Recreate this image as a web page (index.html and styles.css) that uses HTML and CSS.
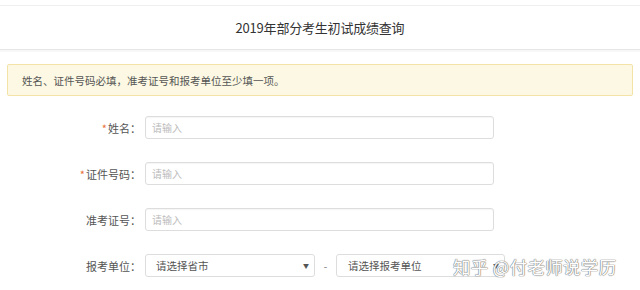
FILE: index.html
```html
<!DOCTYPE html>
<html lang="zh-CN">
<head>
<meta charset="utf-8">
<title>2019年部分考生初试成绩查询</title>
<link rel="stylesheet" href="styles.css">
</head>
<body>
<div class="page">
  <header class="header">
    <h1 class="title">2019年部分考生初试成绩查询</h1>
  </header>
  <div class="alert">姓名、证件号码必填，准考证号和报考单位至少填一项。</div>
  <form class="form">
    <div class="row">
      <label class="label"><span class="req">*</span>姓名：</label>
      <div class="input"><span class="ph">请输入</span></div>
    </div>
    <div class="row">
      <label class="label"><span class="req">*</span>证件号码：</label>
      <div class="input"><span class="ph">请输入</span></div>
    </div>
    <div class="row">
      <label class="label">准考证号：</label>
      <div class="input"><span class="ph">请输入</span></div>
    </div>
    <div class="row">
      <label class="label">报考单位：</label>
      <div class="select first"><span>请选择省市</span><span class="caret">▼</span></div>
      <span class="dash">-</span>
      <div class="select second"><span>请选择报考单位</span><span class="caret">▼</span></div>
    </div>
  </form>
  <div class="watermark">知乎 @付老师说学历</div>
</div>
</body>
</html>
```

FILE: styles.css
```css
* { box-sizing: border-box; }
html, body { margin: 0; padding: 0; background: #fff; }
body {
  font-family: "Noto Sans CJK SC", "Liberation Sans", sans-serif;
  color: #555;
}
.page {
  position: relative;
  width: 640px;
  height: 290px;
  overflow: hidden;
}
.header {
  margin-top: 5px;
  border-top: 1px solid #f0f0f0;
  border-bottom: 1px solid #e6e6e6;
  height: 45px;
  display: flex;
  align-items: center;
  justify-content: center;
  box-shadow: 0 2px 0 #f7f7f7;
}
.title {
  margin: 0;
  font-size: 13px;
  font-weight: normal;
  color: #333;
  letter-spacing: -0.2px;
}
.alert {
  margin: 14px 7px 0;
  height: 32px;
  padding: 0 14px;
  display: flex;
  align-items: center;
  background: #fcf8e3;
  border: 1px solid #f3e3a6;
  border-radius: 2px;
  font-size: 10.5px;
  color: #555;
}
.form {
  margin-top: 20px;
  display: flex;
  flex-direction: column;
  gap: 23px;
}
.row {
  display: flex;
  align-items: center;
  height: 23px;
}
.label {
  width: 141px;
  padding-right: 0;
  text-align: right;
  font-size: 11px;
  color: #555;
  margin-right: 4px;
}
.req {
  color: #e8713c;
  margin-right: 1px;
}
.input {
  width: 349px;
  height: 23px;
  border: 1px solid #ddd;
  border-radius: 3px;
  box-shadow: inset 0 1px 1px rgba(0,0,0,0.04);
  display: flex;
  align-items: center;
  padding-left: 6px;
}
.ph {
  font-size: 10px;
  color: #bbb;
}
.select {
  height: 23px;
  border: 1px solid #ddd;
  border-radius: 3px;
  display: flex;
  align-items: center;
  justify-content: space-between;
  padding: 0 5px 0 10px;
  font-size: 10.5px;
  color: #555;
}
.select.first { width: 170px; }
.select.second { width: 169px; padding-left: 11px; }
.caret {
  font-size: 6px;
  color: #555;
}
.dash {
  width: 21px;
  text-align: center;
  font-size: 10px;
  color: #777;
}
.watermark {
  position: absolute;
  left: 453px;
  top: 254px;
  font-size: 17.5px;
  color: #fff;
  letter-spacing: 0.3px;
  text-shadow: 0 0 1px #777, 0 0 1px #777, 0 0 1px #999;
}
```
